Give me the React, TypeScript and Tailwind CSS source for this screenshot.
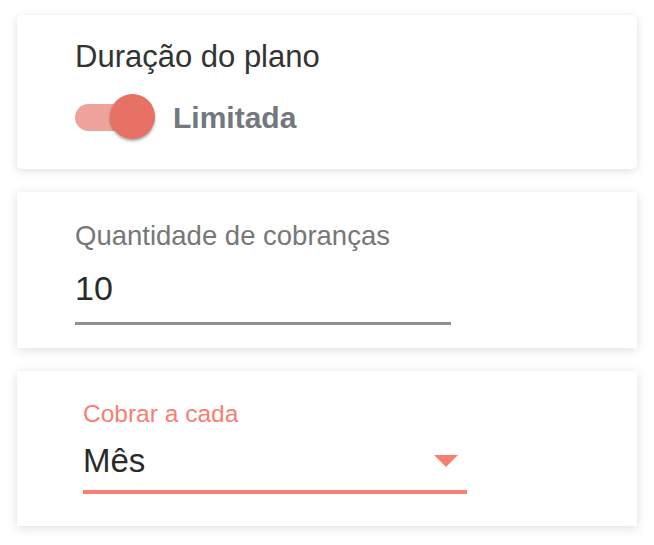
import React from "react";

export default function App() {
  return (
    <div className="w-[654px] h-[545px] bg-white px-[17px] pt-[15px] flex flex-col gap-[23px]" style={{ fontFamily: "'Liberation Sans', Arial, sans-serif" }}>
      <div className="h-[154px] bg-white rounded-[5px] shadow-[0_2px_10px_rgba(0,0,0,0.13)] pl-[58px] pt-[24px]">
        <div className="text-[31px] leading-[36px] text-[#333333]">Duração do plano</div>
        <div className="flex items-center mt-[18px] h-[48px]">
          <div className="relative w-[80px] h-[48px]">
            <div className="absolute left-0 top-[11px] w-[68px] h-[27px] rounded-full bg-[#f0a39d]" />
            <div className="absolute left-[35px] top-[1px] w-[45px] h-[45px] rounded-full bg-[#e87165] shadow-[0_2px_3px_rgba(0,0,0,0.35)]" />
          </div>
          <div className="ml-[18px] text-[30px] font-bold text-[#73777e]">Limitada</div>
        </div>
      </div>
      <div className="h-[156px] bg-white shadow-[0_2px_10px_rgba(0,0,0,0.13)] pl-[58px] pt-[27px]">
        <div className="text-[27.5px] leading-[34px] text-[#777777]">Quantidade de cobranças</div>
        <div className="w-[376px] border-b-[3px] border-[#919191] pt-[15px] pb-[14px]">
          <div className="text-[34px] leading-[40px] text-[#2a2a2a]">10</div>
        </div>
      </div>
      <div className="h-[155px] bg-white shadow-[0_2px_10px_rgba(0,0,0,0.13)] pl-[66px] pt-[29px]">
        <div className="text-[24.5px] leading-[28px] text-[#f88072]">Cobrar a cada</div>
        <div className="w-[384px] border-b-[4px] border-[#f88072] pt-[13px] pb-[9px] flex items-center justify-between">
          <div className="text-[33px] leading-[40px] text-[#2a2a2a]">Mês</div>
          <svg width="24" height="12" viewBox="0 0 24 12" className="mr-[9px]">
            <path d="M0 0 L24 0 L12 12 Z" fill="#f88072" />
          </svg>
        </div>
      </div>
    </div>
  );
}
